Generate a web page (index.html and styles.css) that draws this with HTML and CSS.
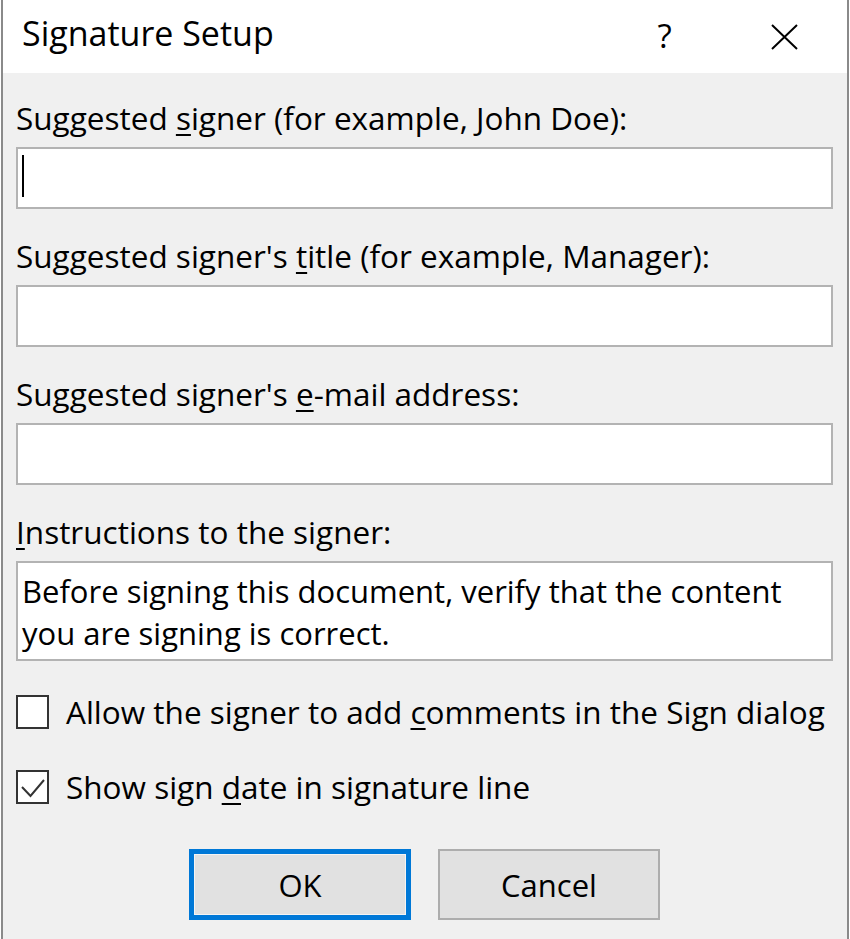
FILE: index.html
```html
<!DOCTYPE html>
<html lang="en">

<head>
    <meta charset="UTF-8">
    <meta name="viewport" content="width=device-width, initial-scale=1.0">
    <title>Signature Setup</title>
    <link rel="stylesheet" href="styles.css">
</head>

<body>
    <div class="dialog">
        <div class="titlebar">
            <span class="title">Signature Setup</span>
            <button class="caption-btn help" type="button">?</button>
            <button class="caption-btn close" type="button" aria-label="Close">
                <svg width="27" height="26" viewBox="0 0 27 26">
                    <path d="M1 1 L26 25 M26 1 L1 25" stroke="#000" stroke-width="2" fill="none" />
                </svg>
            </button>
        </div>

        <form class="content" id="setupForm">
            <div class="field">
                <label for="signer">Suggested <u>s</u>igner (for example, John Doe):</label>
                <div class="textbox">
                    <span class="caret"></span>
                    <input type="text" id="signer" name="signer">
                </div>
            </div>
            <div class="field">
                <label for="signerTitle">Suggested signer's <u>t</u>itle (for example, Manager):</label>
                <div class="textbox">
                    <input type="text" id="signerTitle" name="signerTitle">
                </div>
            </div>
            <div class="field">
                <label for="signerEmail">Suggested signer's <u>e</u>-mail address:</label>
                <div class="textbox">
                    <input type="text" id="signerEmail" name="signerEmail">
                </div>
            </div>
            <div class="field">
                <label for="instructions"><u>I</u>nstructions to the signer:</label>
                <textarea id="instructions" name="instructions" rows="2">Before signing this document, verify that the content you are signing is correct.</textarea>
            </div>

            <label class="check first">
                <span class="box"></span>
                <span>Allow the signer to add <u>c</u>omments in the Sign dialog</span>
            </label>
            <label class="check">
                <span class="box">
                    <svg width="29" height="30" viewBox="0 0 29 30">
                        <path d="M4 15 L12.5 24 L26 8" stroke="#333" stroke-width="2" fill="none" />
                    </svg>
                </span>
                <span>Show sign <u>d</u>ate in signature line</span>
            </label>

            <div class="buttons">
                <button type="submit" class="btn default">OK</button>
                <button type="button" class="btn">Cancel</button>
            </div>
        </form>
    </div>
</body>

</html>
```

FILE: styles.css
```css
body {
    margin: 0;
    background-color: #ffffff;
    font-family: "Open Sans", "Noto Sans", sans-serif;
    color: #000000;
}

.dialog {
    margin: 0 1px;
    height: 939px;
    box-sizing: border-box;
    border-left: 2px solid #8a8a8a;
    border-right: 2px solid #8a8a8a;
    background-color: #f0f0f0;
    display: flex;
    flex-direction: column;
}

/* title bar */
.titlebar {
    height: 73px;
    background-color: #ffffff;
    display: flex;
    align-items: stretch;
}

.title {
    font-size: 34px;
    line-height: 46px;
    padding: 10px 0 0 19px;
}

.caption-btn {
    border: none;
    background: none;
    padding: 0;
    font-family: inherit;
    color: #000000;
    display: flex;
    align-items: center;
    justify-content: center;
}

.help {
    margin-left: auto;
    width: 115px;
    font-size: 33px;
    line-height: 46px;
    padding-bottom: 2px;
}

.close {
    width: 125px;
}

/* form */
.content {
    display: flex;
    flex-direction: column;
    padding: 25px 14px 0 13px;
    font-size: 31.5px;
}

.field {
    display: flex;
    flex-direction: column;
}

.field + .field {
    margin-top: 27px;
}

.field label {
    line-height: 40px;
    margin-bottom: 9px;
}

u {
    text-decoration-thickness: 2px;
    text-underline-offset: 4px;
}

.textbox {
    height: 62px;
    box-sizing: border-box;
    border: 2px solid #b3b3b3;
    background-color: #ffffff;
    display: flex;
    align-items: flex-start;
}

.textbox input {
    flex: 1;
    border: none;
    outline: none;
    height: 100%;
    padding: 0 6px;
    font: inherit;
    background: none;
}

.caret {
    width: 2px;
    height: 42px;
    margin: 6px 0 0 4px;
    background-color: #000000;
}

textarea {
    height: 100px;
    box-sizing: border-box;
    border: 2px solid #b3b3b3;
    padding: 7px 4px;
    font: inherit;
    font-size: 31px;
    line-height: 42px;
    resize: none;
    overflow: hidden;
    outline: none;
    color: #000000;
}

/* checkboxes */
.check {
    height: 40px;
    line-height: 40px;
    display: flex;
    align-items: center;
    gap: 17px;
    margin-top: 35px;
}

.check.first {
    margin-top: 31px;
}

.box {
    width: 33px;
    height: 34px;
    box-sizing: border-box;
    border: 2px solid #333333;
    background-color: #ffffff;
    flex-shrink: 0;
}

.box svg {
    display: block;
}

/* buttons */
.buttons {
    display: flex;
    justify-content: center;
    gap: 27px;
    margin-top: 42px;
}

.btn {
    width: 222px;
    height: 71px;
    box-sizing: border-box;
    border: 2px solid #adadad;
    background-color: #e1e1e1;
    font-family: inherit;
    font-size: 31px;
    color: #000000;
    padding: 0;
}

.btn.default {
    border: 5px solid #0078d7;
    box-shadow: inset 0 0 0 1px #f4f4f4;
}
```
